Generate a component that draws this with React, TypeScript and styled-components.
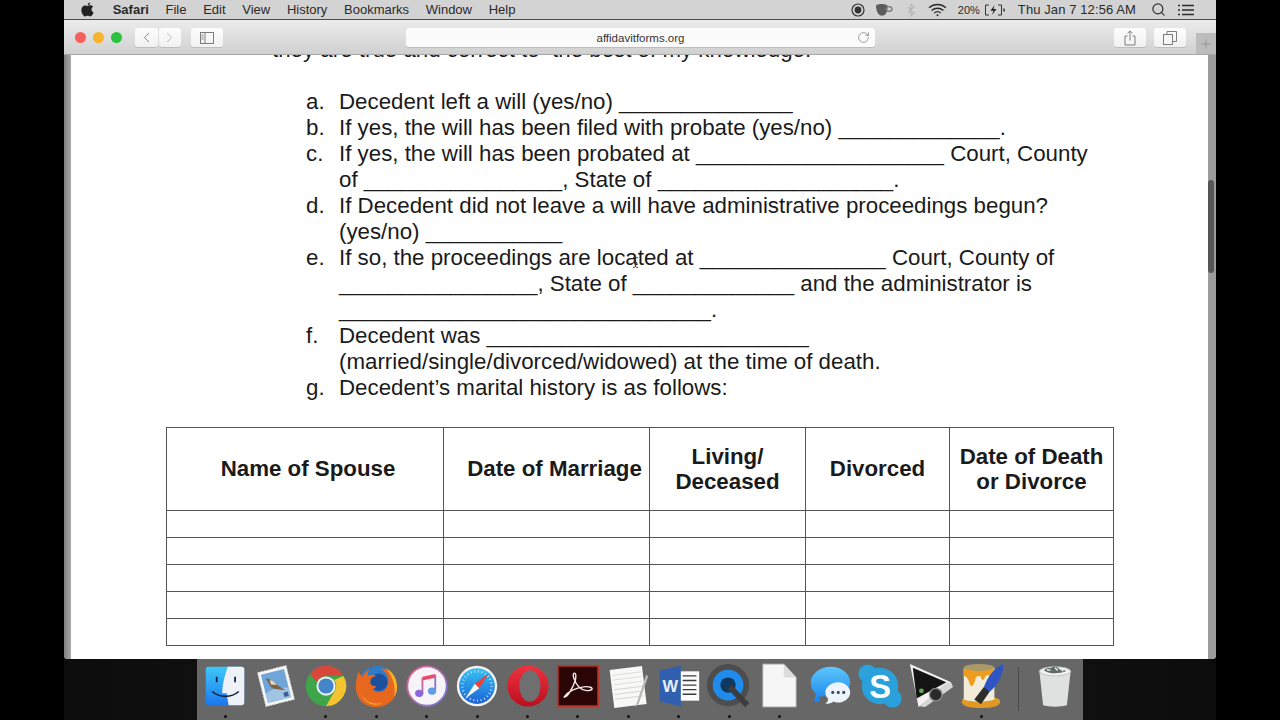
import React from "react";
import styled, { createGlobalStyle } from "styled-components";
import { ChevronLeft, ChevronRight, RotateCw, Search, Bluetooth, Plus } from "lucide-react";

const Global = createGlobalStyle`
  html, body {
    margin: 0;
    padding: 0;
    width: 1280px;
    height: 720px;
    overflow: hidden;
    background: #000;
    font-family: "Liberation Sans", Arial, sans-serif;
  }
  * {
    box-sizing: border-box;
  }
`;

const Stage = styled.div`
  width: 1280px;
  height: 720px;
  display: flex;
  justify-content: center;
  background: #000;
`;
const Screen = styled.div`
  width: 1152px;
  height: 720px;
  display: flex;
  flex-direction: column;
  background: linear-gradient(90deg, #0c0c0c, #1b1b1b 50%, #0c0c0c);
`;

const MenuBar = styled.div`
  height: 20px;
  flex: none;
  display: flex;
  align-items: center;
  justify-content: space-between;
  padding: 0 22px 0 17px;
  background: #d3d3d3;
  border-bottom: 1px solid #4c4c4c;
  color: #2a2a2a;
  font-size: 13px;
`;
const MenuGroup = styled.div<{ $gap: number }>`
  display: flex;
  align-items: center;
  gap: ${(p) => p.$gap}px;
`;
const AppName = styled.span`
  font-weight: 700;
  margin: 0 0 0 2px;
`;
const Clock = styled.span`
  margin: 0 4px 0 1.5px;
  letter-spacing: 0.1px;
`;
const Percent = styled.span`
  font-size: 11px;
`;
const SearchSlot = styled.span`
  display: flex;
  margin-right: 2px;
`;

const Toolbar = styled.div`
  height: 35px;
  flex: none;
  display: flex;
  align-items: center;
  padding: 1px 0 0 11px;
  background: linear-gradient(#ececec, #d0d0d0);
  border-bottom: 1px solid #a8a8a8;
`;
const Light = styled.span<{ $color: string }>`
  width: 11px;
  height: 11px;
  border-radius: 50%;
  background: ${(p) => p.$color};
  margin-right: 7px;
`;
const ToolButton = styled.div<{ $w: number; $mr?: number; $ml?: number }>`
  width: ${(p) => p.$w}px;
  height: 19px;
  margin-left: ${(p) => p.$ml ?? 0}px;
  margin-right: ${(p) => p.$mr ?? 0}px;
  display: flex;
  align-items: center;
  justify-content: center;
  background: linear-gradient(#fdfdfd, #f1f1f1);
  border-radius: 3px;
  box-shadow: 0 1px 0 #bdbdbd;
  color: #777;
`;
const AddressBar = styled.div`
  width: 470px;
  height: 19px;
  margin-left: 183px;
  margin-right: 239px;
  position: relative;
  display: flex;
  align-items: center;
  justify-content: center;
  background: #fbfbfb;
  border-radius: 3px;
  box-shadow: 0 1px 0 #bdbdbd;
  color: #333;
  font-size: 11.5px;
`;
const Reload = styled.span`
  position: absolute;
  right: 5px;
  top: 3px;
  display: flex;
  color: #777;
`;
const NewTab = styled.div`
  width: 20px;
  height: 21px;
  margin-left: 10px;
  align-self: flex-end;
  display: flex;
  align-items: center;
  justify-content: center;
  background: #bcbcbc;
  color: #8a8a8a;
`;

const Viewport = styled.div`
  height: 604px;
  flex: none;
  display: flex;
  overflow: hidden;
  background: #fff;
  border-radius: 0 0 4px 4px;
`;
const Gutter = styled.div`
  width: 7px;
  flex: none;
  background: linear-gradient(90deg, #7f7f7f, #a9a9a9);
`;
const Track = styled.div`
  width: 8px;
  flex: none;
  padding-top: 125px;
  background: #9c9c9c;
`;
const Thumb = styled.div`
  width: 6px;
  height: 93px;
  border-radius: 3px;
  background: #565656;
`;
const Page = styled.div`
  flex: 1;
  position: relative;
  margin-top: -18px;
  color: #1a1a1a;
  font-size: 22.3px;
  line-height: 26px;
  white-space: pre;
`;
const Intro = styled.div`
  padding-left: 201px;
  margin-bottom: 26px;
`;
const List = styled.ol`
  list-style: none;
  margin: 0 0 26px 235px;
  padding: 0;
`;
const Item = styled.li`
  display: flex;
`;
const Marker = styled.span`
  width: 33px;
  flex: none;
`;
const TextCursor = styled.svg`
  position: absolute;
  left: 561px;
  top: 220px;
`;

const Grid = styled.table`
  margin-left: 95px;
  width: 947px;
  table-layout: fixed;
  border-collapse: collapse;
`;
const Head = styled.th<{ $w: number; $pad?: number }>`
  width: ${(p) => p.$w}px;
  height: 83px;
  padding: 0 0 0 ${(p) => p.$pad ?? 0}px;
  border: 1px solid #555;
  font-weight: 700;
  line-height: 25.5px;
  text-align: center;
  white-space: pre;
`;
const Cell = styled.td`
  height: 27px;
  padding: 0;
  border: 1px solid #555;
`;

const DockRow = styled.div`
  flex: 1;
  display: flex;
  justify-content: center;
`;
const Dock = styled.div`
  width: 886px;
  display: flex;
  padding-left: 3px;
  background: #676767;
`;
const DockSlot = styled.div`
  width: 50.4px;
  flex: none;
  display: flex;
  flex-direction: column;
  align-items: center;
  padding-top: 3px;
`;
const IconBox = styled.div`
  height: 48px;
  display: flex;
  align-items: center;
`;
const DockDot = styled.span<{ $on: boolean }>`
  width: 3px;
  height: 3px;
  margin-top: 5px;
  border-radius: 50%;
  background: ${(p) => (p.$on ? "#111" : "transparent")};
`;
const DockDivider = styled.div`
  width: 1px;
  height: 44px;
  margin: 8px 11px 0 12px;
  background: #4a4a4a;
`;

const Apple = () => (
  <svg width="13" height="15" viewBox="0 0 24 28" fill="#222">
    <path d="M17 1c.3 2.300-1.900 5.200-4.700 5C12 3.500 14.400 1.200 17 1zM12.300 7.500c1.300 0 2.900-1.300 5.100-1.300 1.900 0 3.900 1 5.100 2.800-4.400 2.600-3.700 8.700.9 10.500-1.300 3.100-3.700 7.500-6.400 7.500-1.900 0-2.500-1.200-4.700-1.200s-2.900 1.200-4.700 1.200C4.300 27 .5 20.500.5 15 .5 9.700 3.900 6.400 7.500 6.400c2.100 0 3.600 1.100 4.800 1.100z" />
  </svg>
);
const RecordIcon = () => (
  <svg width="14" height="14" viewBox="0 0 14 14">
    <circle cx="7" cy="7" r="6" fill="none" stroke="#333" strokeWidth="1.200" />
    <circle cx="7" cy="7" r="3.400" fill="#333" />
  </svg>
);
const CupIcon = () => (
  <svg width="18" height="13" viewBox="0 0 18 13">
    <path d="M1 2.500C3 .5 10 .5 12.500 2.500c.5 4-1 9-4 10h-3c-3-1-4.500-6-4.500-10z" fill="#5b5b5b" />
    <ellipse cx="14" cy="6" rx="3" ry="2.300" fill="none" stroke="#777" strokeWidth="1.300" />
  </svg>
);
const WifiIcon = () => (
  <svg width="19" height="14" viewBox="0 0 19 14" fill="none" stroke="#2a2a2a" strokeWidth="1.300">
    <path d="M1 4.800c5-4.400 12-4.400 17 0M3.600 7.500c3.400-3 8.400-3 11.800 0M6.200 10.100c2-1.700 4.600-1.700 6.600 0" />
    <circle cx="9.500" cy="12.300" r="1" fill="#2a2a2a" stroke="none" />
  </svg>
);
const BatteryIcon = () => (
  <svg width="22" height="12" viewBox="0 0 22 12" fill="none" stroke="#333" strokeWidth="1">
    <path d="M5 1H1.500v10H5M14 1h3.500v10H14" />
    <path d="M20 4.500v3" strokeWidth="1.500" />
    <path d="M10.500 1 6.500 6.800h3L8 11l4.500-6h-3z" fill="#222" stroke="none" />
  </svg>
);
const ListIcon = () => (
  <svg width="16" height="12" viewBox="0 0 16 12" stroke="#2a2a2a" strokeWidth="1.400">
    <path d="M0 1.500h2M4 1.500h12M0 6h2M4 6h12M0 10.500h2M4 10.500h12" />
  </svg>
);
const SidebarIcon = () => (
  <svg width="14" height="12" viewBox="0 0 14 12" fill="none" stroke="#7c7c7c">
    <rect x=".5" y=".5" width="13" height="11" />
    <path d="M5 .5v11M1.500 3h2M1.500 5h2M1.500 7h2" />
  </svg>
);
const ShareIcon = () => (
  <svg width="12" height="16" viewBox="0 0 12 16" fill="none" stroke="#7c7c7c">
    <path d="M3.500 6H1v9h10V6H8.500M6 10.500V1M3.500 3.300 6 1l2.500 2.300" />
  </svg>
);
const TabsIcon = () => (
  <svg width="14" height="14" viewBox="0 0 14 14" fill="none" stroke="#7c7c7c">
    <rect x=".5" y="3.500" width="9" height="10" fill="#f6f6f6" />
    <path d="M4 3.500V.5h9.500v10h-4" />
  </svg>
);

const FinderIcon = () => (
  <svg width="44" height="44" viewBox="0 0 48 48">
    <defs>
      <linearGradient id="fnd" x1="0" y1="0" x2="0" y2="1">
        <stop offset="0" stopColor="#3fc8f8" />
        <stop offset="1" stopColor="#1b78ee" />
      </linearGradient>
    </defs>
    <rect x="3" y="3" width="42" height="42" rx="3" fill="url(#fnd)" />
    <path d="M27 3h15a3 3 0 0 1 3 3v36a3 3 0 0 1-3 3H28c-1-6-2-9-2-13h-5c0-10 3-20 6-29z" fill="#eef2f8" />
    <path d="M15 14v6M35 14v6" stroke="#1a2a44" strokeWidth="2" />
    <path d="M10 30c8 7 21 7 29 0" fill="none" stroke="#16243c" strokeWidth="1.800" />
  </svg>
);
const MailIcon = () => (
  <svg width="44" height="44" viewBox="0 0 48 48">
    <g transform="rotate(-14 24 24)">
      <rect x="8" y="5" width="32" height="38" fill="#f6f6f6" stroke="#ddd" strokeDasharray="2 1.500" />
      <rect x="11" y="8" width="26" height="32" fill="#6fa5d9" />
      <path d="M11 30c8-5 18-3 26-1v11H11z" fill="#9fc4e4" />
      <path d="M15 13c5 2 9 6 11 11l7 7-8-3c-5-1-8-5-8-9z" fill="#7d6248" />
      <path d="M19 16c3 1 5 4 6 7l-6-2z" fill="#e3d7c4" />
      <rect x="30" y="33" width="5" height="5" fill="#3c5f92" />
    </g>
  </svg>
);
const ChromeIcon = () => (
  <svg width="44" height="44" viewBox="0 0 48 48">
    <circle cx="24" cy="24" r="22" fill="#3ea54a" />
    <path d="M24 2a22 22 0 0 1 19.100 11H24a11 11 0 0 0-10.200 6.800L6.500 10.700A22 22 0 0 1 24 2z" fill="#d9463c" />
    <path d="M43.100 13A22 22 0 0 1 24 46l9.500-16.500A11 11 0 0 0 33 17.500z" fill="#f4c430" />
    <circle cx="24" cy="24" r="10.500" fill="#f1f1f1" />
    <circle cx="24" cy="24" r="8.300" fill="#4285c8" />
  </svg>
);
const FirefoxIcon = () => (
  <svg width="46" height="46" viewBox="0 0 48 48">
    <circle cx="25" cy="23" r="20" fill="#2f7cc4" />
    <circle cx="27" cy="20" r="9" fill="#1c4f9c" />
    <path d="M35 6c7 4 11 11 11 19 0 12-10 21-22 21C12 46 3 37 3 25c0-6 1-12 3-16 1 2 2 4 4 5 1-3 4-6 7-7-2 3-2 5-1 6 3-1 6-1 8 1-3 0-6 2-6 6 0 3 3 4 6 4 0 2-2 3-4 3 3 4 10 5 14 0 5-6 4-16-5-21z" fill="#e8671f" />
    <path d="M35 6c6 3 11 10 11 19 0 4-1 7-3 10 2-9-1-20-8-29z" fill="#f6b42c" />
    <path d="M8 30c3 10 12 14 22 12-8 4-19 0-22-12z" fill="#f6b42c" />
  </svg>
);
const MusicIcon = () => (
  <svg width="44" height="44" viewBox="0 0 48 48">
    <defs>
      <linearGradient id="mus" x1="0" y1="0" x2="1" y2="1">
        <stop offset="0" stopColor="#ec5d86" />
        <stop offset="1" stopColor="#6b7ce0" />
      </linearGradient>
    </defs>
    <circle cx="24" cy="24" r="21.500" fill="#f7f4f8" stroke="url(#mus)" strokeWidth="2" />
    <path d="M19 14l14-3v4l-14 3z" fill="#ee4a6c" />
    <path d="M19 15v17M33 12v17" stroke="url(#mus)" strokeWidth="2" />
    <ellipse cx="15.500" cy="32" rx="4.500" ry="4" fill="#8a68dc" />
    <ellipse cx="29.500" cy="29.500" rx="4.500" ry="4" fill="#5f9be6" />
  </svg>
);
const SafariIcon = () => (
  <svg width="44" height="44" viewBox="0 0 48 48">
    <defs>
      <linearGradient id="saf" x1="0" y1="0" x2="0" y2="1">
        <stop offset="0" stopColor="#35c3f3" />
        <stop offset="1" stopColor="#1c62d6" />
      </linearGradient>
    </defs>
    <circle cx="24" cy="24" r="22" fill="#f3f3f3" />
    <circle cx="24" cy="24" r="19.500" fill="url(#saf)" />
    <circle cx="24" cy="24" r="16" fill="none" stroke="#cfe6fa" strokeWidth="2.500" strokeDasharray="1 3" />
    <path d="M37 10 21.500 21.500 26.500 26.500z" fill="#e8433c" />
    <path d="M11 38 26.500 26.500 21.500 21.500z" fill="#f4f4f4" />
  </svg>
);
const OperaIcon = () => (
  <svg width="46" height="46" viewBox="0 0 48 48">
    <defs>
      <linearGradient id="opr" x1="0" y1="0" x2="0" y2="1">
        <stop offset="0" stopColor="#f0323f" />
        <stop offset="1" stopColor="#b90f1f" />
      </linearGradient>
    </defs>
    <circle cx="24" cy="24" r="21.500" fill="url(#opr)" />
    <ellipse cx="26" cy="24" rx="11" ry="16.500" fill="#6f6f6f" />
  </svg>
);
const AcrobatIcon = () => (
  <svg width="44" height="44" viewBox="0 0 48 48">
    <rect x="2" y="2" width="44" height="44" fill="#2b0505" stroke="#b93329" strokeWidth="2" />
    <path d="M9 36c3 1 9-9 12-18 1-4 1-8-1-8-3 0 0 10 5 15 4 4 11 5 14 3 2-2-3-4-9-3-8 1-17 5-21 11z" fill="none" stroke="#f2eaea" strokeWidth="1.500" />
  </svg>
);
const NotesIcon = () => (
  <svg width="46" height="46" viewBox="0 0 48 48">
    <g transform="rotate(-7 24 24)">
      <rect x="7" y="5" width="34" height="40" fill="#f8f8f6" />
      <path d="M9 11h30M9 16h30M9 21h30M9 26h30M9 31h30M9 36h30" stroke="#d5d5d2" />
    </g>
    <path d="M43 12 33 42l-2 4 4-3 10-29z" fill="#b9b9b9" />
  </svg>
);
const WordIcon = () => (
  <svg width="44" height="44" viewBox="0 0 48 48">
    <rect x="24" y="8" width="22" height="32" fill="#fbfbfb" />
    <path d="M28 13h15M28 18h15M28 23h15M28 28h15M28 33h15" stroke="#3a3a3a" strokeWidth="1.500" />
    <path d="M3 7 26 2v44L3 41z" fill="#2f5fae" />
    <text x="14.500" y="31" textAnchor="middle" fill="#e8eef8" fontSize="18" fontWeight="700" fontFamily="Liberation Sans, sans-serif">W</text>
  </svg>
);
const QuickTimeIcon = () => (
  <svg width="46" height="46" viewBox="0 0 48 48">
    <circle cx="23" cy="23" r="19" fill="#1f8bea" stroke="#4d4d4d" strokeWidth="6" />
    <circle cx="23" cy="23" r="8" fill="#12385e" />
    <path d="M25 25 43 44" stroke="#3d3d3d" strokeWidth="6" />
  </svg>
);
const FileIcon = () => (
  <svg width="46" height="46" viewBox="0 0 48 48">
    <path d="M7 1h22l13 14v31H7z" fill="#f6f6f6" stroke="#9a9a9a" />
    <path d="M29 1v14h13z" fill="#dcdcdc" />
  </svg>
);
const MessagesIcon = () => (
  <svg width="44" height="44" viewBox="0 0 48 48">
    <defs>
      <linearGradient id="msg" x1="0" y1="0" x2="0" y2="1">
        <stop offset="0" stopColor="#5cc6fb" />
        <stop offset="1" stopColor="#1b86ef" />
      </linearGradient>
    </defs>
    <path d="M25 3c12 0 21 8 21 17 0 4-2 8-5 11l-30 5 3 5c-4 0-6 0-8-1 2-2 3-5 2-8C4 28 3 24 3 20 3 11 13 3 25 3z" fill="url(#msg)" />
    <path d="M33 20c7 0 13 5 13 11s-6 11-13 11c-2 0-4 0-5-1-3 2-6 3-9 2 2-1 3-3 3-5-2-2-3-4-3-7 0-6 7-11 14-11z" fill="#eef4fb" />
    <circle cx="27" cy="31" r="1.700" fill="#3a4b63" />
    <circle cx="33" cy="31" r="1.700" fill="#3a4b63" />
    <circle cx="39" cy="31" r="1.700" fill="#3a4b63" />
  </svg>
);
const SkypeIcon = () => (
  <svg width="46" height="46" viewBox="0 0 48 48">
    <circle cx="24" cy="24" r="19" fill="#2aa1db" />
    <circle cx="11" cy="11" r="9.500" fill="#2aa1db" />
    <circle cx="37" cy="37" r="9.500" fill="#2aa1db" />
    <text x="24" y="36" textAnchor="middle" fill="#fff" fontSize="34" fontWeight="700" fontFamily="Liberation Sans, sans-serif">S</text>
  </svg>
);
const ProjectorIcon = () => (
  <svg width="46" height="46" viewBox="0 0 48 48">
    <path d="M2 1 45 20 11 46z" fill="#f2f2f2" />
    <path d="M5 5 40 20 9 37z" fill="#141414" />
    <path d="M38 22 45 20 47 25 18 46 12 45z" fill="#d6d6d6" />
    <circle cx="29" cy="33" r="6.500" fill="#2a2a2a" stroke="#8a8a8a" strokeWidth="1.500" />
    <circle cx="14" cy="29" r="2.500" fill="#5fae4c" />
  </svg>
);
const BrushIcon = () => (
  <svg width="46" height="46" viewBox="0 0 48 48">
    <path d="M4 40c0-4 6-5 18-5s22 1 22 5-4 7-20 7S4 44 4 40z" fill="#e09a24" />
    <path d="M6 5h32v33c-8 3-24 3-32 0z" fill="#f1ecd9" />
    <ellipse cx="22" cy="5" rx="16" ry="4" fill="#a99a68" />
    <path d="M6 6c8 3 24 3 32 0v7c-1 3-4 4-5 1-1-2-3-2-5 1-2 4-3 3-4 0-1-2-5-2-6 2-1 6-4 10-6 4-1-4-3-7-6-8z" fill="#ed9d1e" />
    <path d="M47 1c1 9-5 22-14 29-3 0-5-2-6-5C31 14 38 5 47 1z" fill="#2f55c4" />
    <path d="M27 25l6 5-9 13-7-5z" fill="#2d2d2d" />
  </svg>
);
const TrashIcon = () => (
  <svg width="44" height="44" viewBox="0 0 48 48">
    <path d="M7 8h34l-4 37c-6 2-20 2-26 0z" fill="#dfe1e1" />
    <ellipse cx="24" cy="8" rx="17" ry="5" fill="#f1f1f1" stroke="#bdbdbd" />
    <path d="M12 7c3-4 6-2 8-3s6-2 8 1 6 0 8 3c-8 3-18 3-24-1z" fill="#5d6a68" />
    <path d="M15 6l4 1M24 4l3 3M31 6l2 2" stroke="#eee" strokeWidth="1.500" />
  </svg>
);

const menus = ["File", "Edit", "View", "History", "Bookmarks", "Window", "Help"];

const lists: { mark: string; lines: string[] }[] = [
  { mark: "a.", lines: ["Decedent left a will (yes/no) " + "_".repeat(14)] },
  { mark: "b.", lines: ["If yes, the will has been filed with probate (yes/no) " + "_".repeat(13) + "."] },
  {
    mark: "c.",
    lines: [
      "If yes, the will has been probated at " + "_".repeat(20) + " Court, County",
      "of " + "_".repeat(16) + ", State of " + "_".repeat(19) + ".",
    ],
  },
  {
    mark: "d.",
    lines: ["If Decedent did not leave a will have administrative proceedings begun?", "(yes/no) " + "_".repeat(11)],
  },
  {
    mark: "e.",
    lines: [
      "If so, the proceedings are located at " + "_".repeat(15) + " Court, County of",
      "_".repeat(16) + ", State of " + "_".repeat(13) + " and the administrator is",
      "_".repeat(30) + ".",
    ],
  },
  {
    mark: "f.",
    lines: ["Decedent was " + "_".repeat(26), "(married/single/divorced/widowed) at the time of death."],
  },
  { mark: "g.", lines: ["Decedent’s marital history is as follows:"] },
];

const columns: { label: string; w: number; pad?: number }[] = [
  { label: "Name of Spouse", w: 277, pad: 6 },
  { label: "Date of Marriage", w: 206, pad: 16 },
  { label: "Living/\nDeceased", w: 156 },
  { label: "Divorced", w: 144 },
  { label: "Date of Death\nor Divorce", w: 164 },
];

const dockApps: { name: string; icon: React.ReactNode; on: boolean }[] = [
  { name: "finder", icon: <FinderIcon />, on: true },
  { name: "mail", icon: <MailIcon />, on: false },
  { name: "chrome", icon: <ChromeIcon />, on: true },
  { name: "firefox", icon: <FirefoxIcon />, on: true },
  { name: "music", icon: <MusicIcon />, on: true },
  { name: "safari", icon: <SafariIcon />, on: true },
  { name: "opera", icon: <OperaIcon />, on: true },
  { name: "acrobat", icon: <AcrobatIcon />, on: true },
  { name: "notes", icon: <NotesIcon />, on: true },
  { name: "word", icon: <WordIcon />, on: true },
  { name: "quicktime", icon: <QuickTimeIcon />, on: true },
  { name: "file", icon: <FileIcon />, on: true },
  { name: "messages", icon: <MessagesIcon />, on: false },
  { name: "skype", icon: <SkypeIcon />, on: false },
  { name: "projector", icon: <ProjectorIcon />, on: false },
  { name: "brush", icon: <BrushIcon />, on: true },
];

export default function App() {
  return (
    <Stage>
      <Global />
      <Screen>
        <MenuBar>
          <MenuGroup $gap={16.7}>
            <Apple />
            <AppName>Safari</AppName>
            {menus.map((m) => (
              <span key={m}>{m}</span>
            ))}
          </MenuGroup>
          <MenuGroup $gap={10.5}>
            <RecordIcon />
            <CupIcon />
            <Bluetooth size={14} color="#b5b5b5" />
            <WifiIcon />
            <MenuGroup $gap={4}>
              <Percent>20%</Percent>
              <BatteryIcon />
            </MenuGroup>
            <Clock>Thu Jan 7 12:56 AM</Clock>
            <SearchSlot>
              <Search size={15} color="#333" />
            </SearchSlot>
            <ListIcon />
          </MenuGroup>
        </MenuBar>
        <Toolbar>
          <Light $color="#f4605a" />
          <Light $color="#f6b32e" />
          <Light $color="#2cc23f" />
          <ToolButton $w={23} $mr={1} $ml={6}>
            <ChevronLeft size={17} strokeWidth={1.3} />
          </ToolButton>
          <ToolButton $w={22} $mr={10}>
            <ChevronRight size={17} strokeWidth={1.3} color="#b0b0b0" />
          </ToolButton>
          <ToolButton $w={32}>
            <SidebarIcon />
          </ToolButton>
          <AddressBar>
            affidavitforms.org
            <Reload>
              <RotateCw size={13} strokeWidth={1.3} />
            </Reload>
          </AddressBar>
          <ToolButton $w={32} $mr={8}>
            <ShareIcon />
          </ToolButton>
          <ToolButton $w={32}>
            <TabsIcon />
          </ToolButton>
          <NewTab>
            <Plus size={14} strokeWidth={1.2} />
          </NewTab>
        </Toolbar>
        <Viewport>
          <Gutter />
          <Page>
            <Intro>they are true and correct to  the best of my knowledge.</Intro>
            <List>
              {lists.map((it) => (
                <Item key={it.mark}>
                  <Marker>{it.mark}</Marker>
                  <div>
                    {it.lines.map((l) => (
                      <div key={l}>{l}</div>
                    ))}
                  </div>
                </Item>
              ))}
            </List>
            <Grid>
              <thead>
                <tr>
                  {columns.map((c) => (
                    <Head key={c.label} $w={c.w} $pad={c.pad}>
                      {c.label}
                    </Head>
                  ))}
                </tr>
              </thead>
              <tbody>
                {[0, 1, 2, 3, 4].map((r) => (
                  <tr key={r}>
                    {columns.map((c) => (
                      <Cell key={c.label} />
                    ))}
                  </tr>
                ))}
              </tbody>
            </Grid>
            <TextCursor width="7" height="11" viewBox="0 0 7 11" fill="none" stroke="#333" strokeWidth="1">
              <path d="M1 .5c1 0 2 .5 2.500 1C4 1 5 .5 6 .5M3.500 1.500v8M1 10.500c1 0 2-.5 2.500-1 .5.500 1.500 1 2.500 1M2 5.500h3" />
            </TextCursor>
          </Page>
          <Track>
            <Thumb />
          </Track>
        </Viewport>
        <DockRow>
          <Dock>
            {dockApps.map((d) => (
              <DockSlot key={d.name}>
                <IconBox>{d.icon}</IconBox>
                <DockDot $on={d.on} />
              </DockSlot>
            ))}
            <DockDivider />
            <DockSlot>
              <IconBox>
                <TrashIcon />
              </IconBox>
              <DockDot $on={false} />
            </DockSlot>
          </Dock>
        </DockRow>
      </Screen>
    </Stage>
  );
}
